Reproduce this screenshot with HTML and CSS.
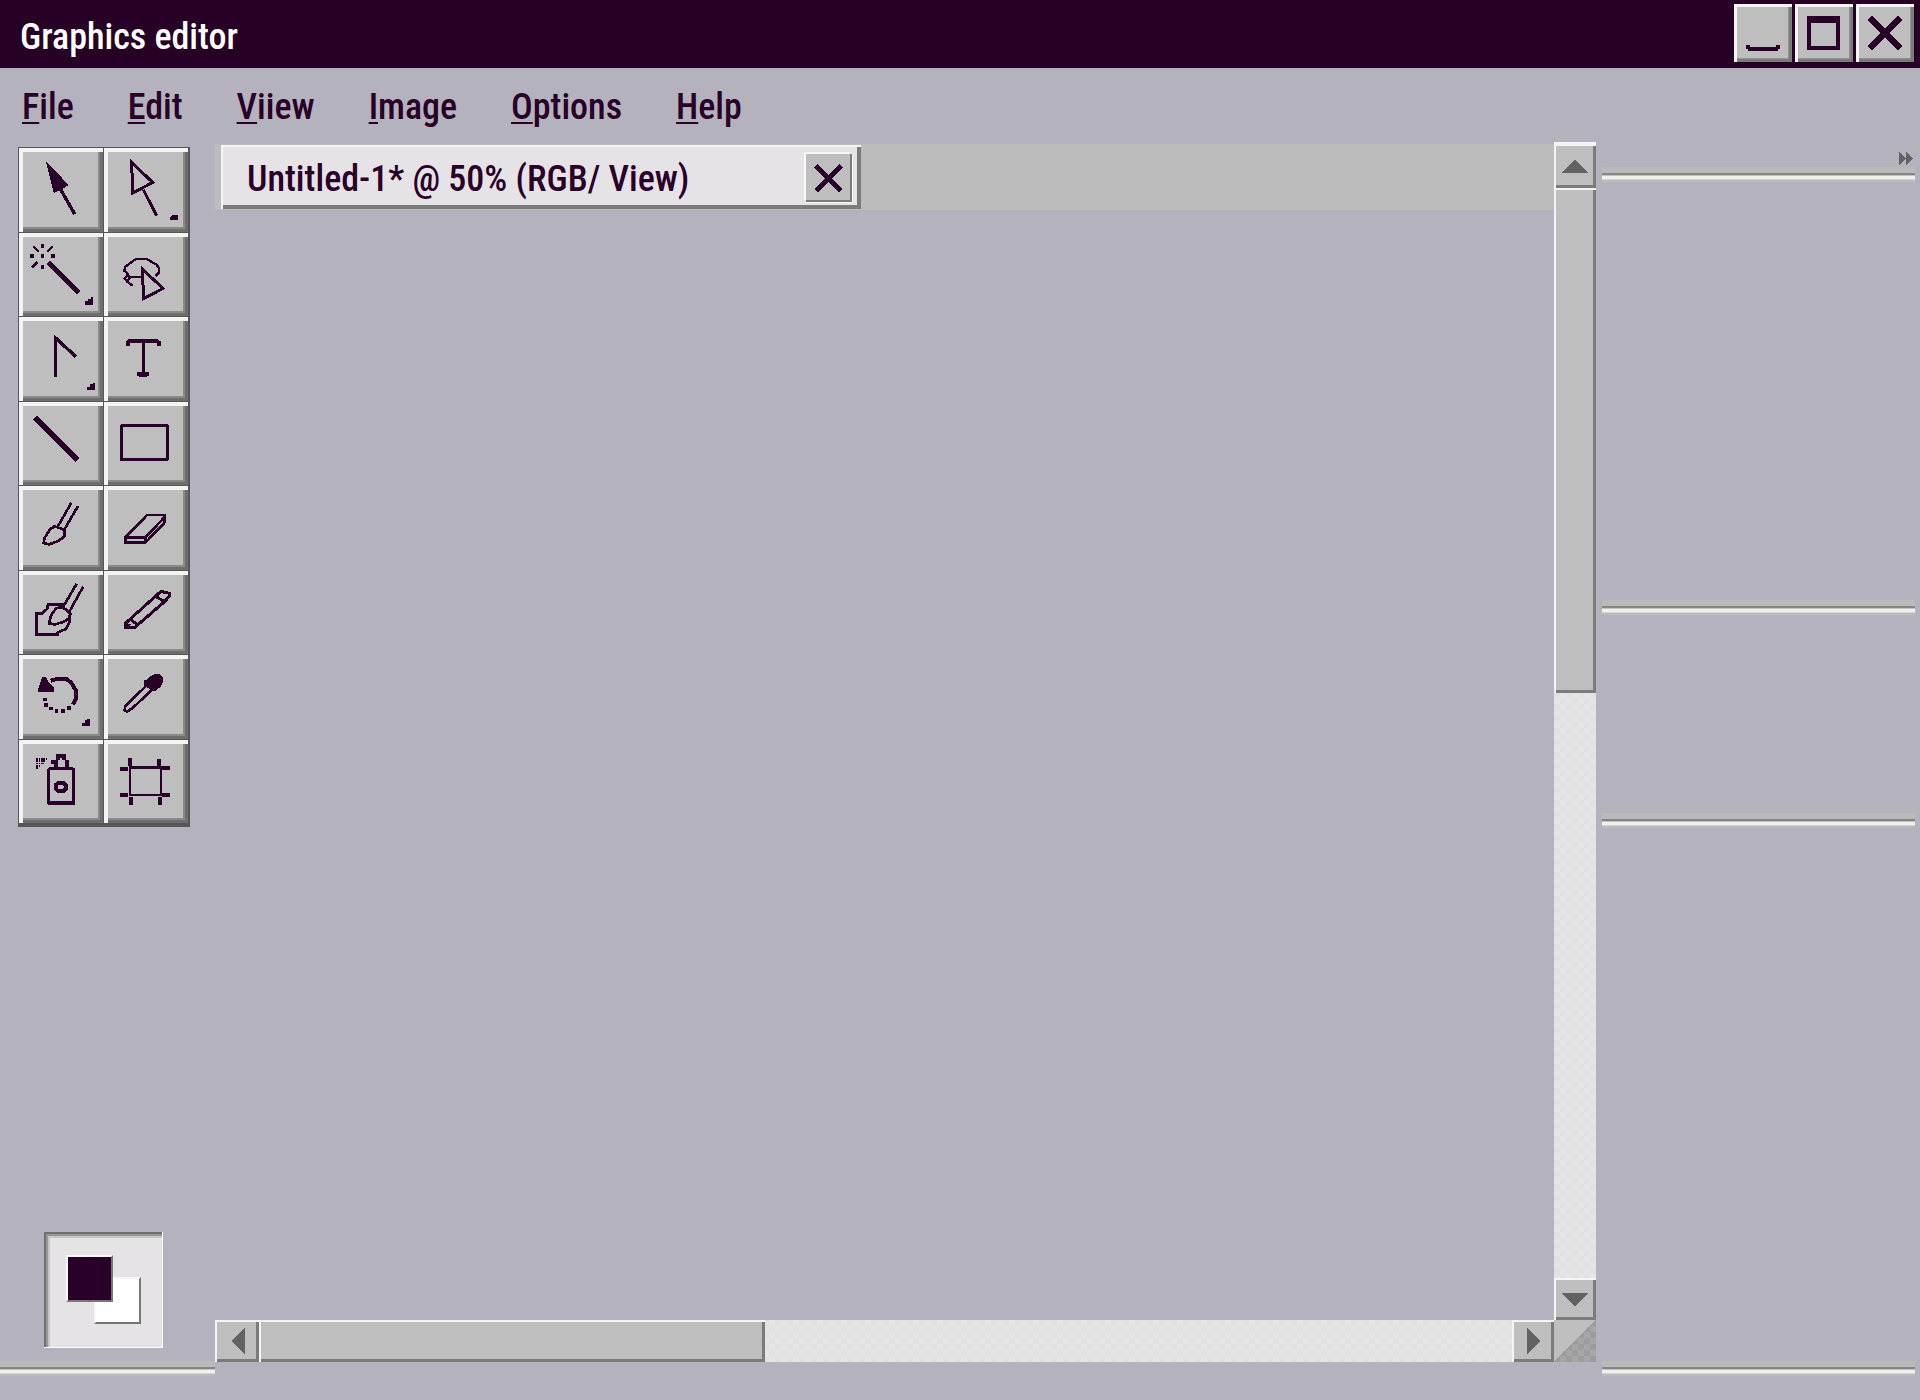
FILE: index.html
```html
<!DOCTYPE html>
<html lang="en">
<head>
<meta charset="utf-8">
<title>Graphics editor</title>
<link rel="stylesheet" href="styles.css">
</head>
<body>
<header class="titlebar">
  <h1 class="title">Graphics editor</h1>
  <div class="window-buttons">
    <button class="win-btn" aria-label="Minimize"><svg viewBox="0 0 174 174"><path class="f" d="M37 123h12v6h76v-6h12v12h-4v6H41v-6h-4z"/></svg></button>
    <button class="win-btn" aria-label="Maximize"><svg viewBox="0 0 174 174"><path d="M42 42h88v90H42z" stroke-width="12"/><path d="M41 47h90" stroke-width="22"/></svg></button>
    <button class="win-btn" aria-label="Close"><svg viewBox="0 0 174 174"><path d="M42 42l91 91M133 42l-91 91" stroke-width="19"/></svg></button>
  </div>
</header>
<nav class="menubar">
  <a href="#file"><u>F</u>ile</a>
  <a href="#edit"><u>E</u>dit</a>
  <a href="#view"><u>V</u>iiew</a>
  <a href="#image"><u>I</u>mage</a>
  <a href="#options"><u>O</u>ptions</a>
  <a href="#help"><u>H</u>elp</a>
</nav>
<main class="workspace">
  <aside class="left">
    <div class="toolbox">
      <button aria-label="Select"><svg viewBox="3 3 252 250"><path class="f" d="M84 44L152 113 130 128 107 138z"/><path d="M126 124L170 201" stroke-width="10"/></svg></button>
      <button aria-label="Direct select"><svg viewBox="3 3 252 250"><path d="M86 46l63 60-60 32zM121 128l40 78" stroke-width="9"/><path class="f" d="M200 220v-8l8-8h16v16z"/></svg></button>
      <button aria-label="Magic wand"><svg viewBox="3 3 252 250"><path d="M68 42h11M68 72h11M68 104h11M36 72h12M98 72h12" stroke-width="11"/><path d="M45 42l17 17M104 42l-17 17M42 106l17-17" stroke-width="7"/><path d="M91 90l91 91" stroke-width="14"/><path class="f" d="M202 218v-10h8v-8h8v-5h6v23z"/></svg></button>
      <button aria-label="Lasso"><svg viewBox="3 3 252 250"><path d="M76 126L64 116 67 104 91 86 101 81H131L161 98 169 109 167 122 157 132M76 126L65 139 71 147 81 139 74 128M81 135H116M72 148L89 161" stroke-width="7"/><path d="M119 112L180 169 121 200z" stroke-width="9"/></svg></button>
      <button aria-label="Pen"><svg viewBox="3 3 252 250"><path d="M113 183V66L174 122" stroke-width="10"/><path class="f" d="M208 223v-10h8v-8h8v-5h8v23z"/></svg></button>
      <button aria-label="Text"><svg viewBox="3 3 252 250"><path d="M75 91V79L81 74H161L167 79V91" stroke-width="12"/><path d="M120 74V178" stroke-width="9"/><path d="M101 174H139M109 179H132" stroke-width="10"/></svg></button>
      <button aria-label="Line"><svg viewBox="3 3 252 250"><path d="M51 49L179 177" stroke-width="17"/></svg></button>
      <button aria-label="Rectangle"><svg viewBox="3 3 252 250"><rect x="54" y="74" width="139" height="102" rx="3" stroke-width="9"/></svg></button>
      <button aria-label="Brush"><svg viewBox="3 3 252 250"><path d="M160 53L118 127M180 63L138 135M109 124L130 130 140 138V154L120 168 93 178 77 174 79 160 95 134z" stroke-width="8"/></svg></button>
      <button aria-label="Eraser"><svg viewBox="3 3 252 250"><path d="M132 90H185V112L127 173H67V157zM67 157H127L185 96M127 157V173" stroke-width="8"/></svg></button>
      <button aria-label="Smudge"><svg viewBox="3 3 252 250"><path d="M176 41L135 111M196 49L155 123M115 114L133 111 147 121 157 131 155 144 135 156 110 163 93 160 99 136zM138 103H90L88 116 72 130H56V194H118V188L145 176 155 156V136" stroke-width="8"/></svg></button>
      <button aria-label="Pencil"><svg viewBox="3 3 252 250"><path d="M174 64L200 70V78L181 98 94 173H66V161L159 77zM159 80L184 94M80 146L104 164" stroke-width="9"/><path class="f" d="M66 158L84 162 80 170 94 174H66z"/></svg></button>
      <button aria-label="Undo"><svg viewBox="3 3 252 250"><path class="f" d="M73 68h10l10 18 16 16v12H60v-8z"/><path d="M98 80L115 75H145L159 85 175 111V133L165 151" stroke-width="12"/><path d="M76 136h11M78 153h11M93 163h11M110 170h11M129 170h11M147 161h11" stroke-width="11"/><path class="f" d="M192 217v-10h8v-8h8v-5h9v23z"/></svg></button>
      <button aria-label="Eyedropper"><svg viewBox="3 3 252 250"><path class="f" d="M122 80l12-5 8-8 10-6h18l10 10v14l-8 14-10 6-7 7h-11v-6l-22-10z"/><path d="M131 94L67 156 65 169 73 172 91 160 147 107" stroke-width="8"/></svg></button>
      <button aria-label="Spray"><svg viewBox="3 3 252 250"><rect x="92" y="89" width="75" height="106" rx="3" stroke-width="8"/><path d="M92 192H167" stroke-width="10"/><path d="M114 86V62M119 62V51H138V62M147 62V86M98 69H112" stroke-width="11"/><path d="M119 133H137L143 138V149L137 155H119L113 149V138z" stroke-width="12"/><path d="M55 59h36M55 66h29M55 73h22M55 80h15M55 87h8" stroke-width="5" stroke-dasharray="5 2"/></svg></button>
      <button aria-label="Crop"><svg viewBox="3 3 252 250"><path d="M81 86H174V168H81z" stroke-width="8"/><path d="M81 57V84M169 84V56M51 90H76M176 87H201M51 168H76M176 168H201M83 174V200M172 174V200" stroke-width="12" stroke-dasharray="12 1"/></svg></button>
    </div>
    <div class="swatches">
      <div class="swatch back"></div>
      <div class="swatch front"></div>
    </div>
    <hr class="groove">
  </aside>
  <section class="document">
    <div class="tabs">
      <div class="tab">
        <span class="tab-name">Untitled-1* @ 50% (RGB/ View)</span>
        <button class="tab-close" aria-label="Close document"><svg viewBox="0 0 46 46"><path d="M10 11l25 25M35 11L10 36" stroke-width="5"/></svg></button>
      </div>
    </div>
    <div class="canvas"></div>
    <div class="vscroll">
      <button class="arrow first" aria-label="Scroll up"><svg viewBox="0 0 42 42"><path class="g" d="M8 29L21 15 34 29z"/></svg></button>
      <div class="track"><div class="thumb"></div></div>
      <button class="arrow" aria-label="Scroll down"><svg viewBox="0 0 42 42"><path class="g" d="M8 15H34L21 29z"/></svg></button>
    </div>
    <div class="hscroll">
      <button class="arrow" aria-label="Scroll left"><svg viewBox="0 0 42 42"><path class="g" d="M29 8V35L15 21z"/></svg></button>
      <div class="track"><div class="thumb"></div></div>
      <button class="arrow" aria-label="Scroll right"><svg viewBox="0 0 42 42"><path class="g" d="M15 8V34L28 21z"/></svg></button>
    </div>
    <div class="corner"></div>
  </section>
  <aside class="right">
    <div class="panel-head"><button class="expand" aria-label="Expand panels"><svg viewBox="0 0 14 13"><path class="g" d="M0 0v13l7-6.500zM7 0v13l7-6.500z"/></svg></button></div>
    <hr class="groove">
    <div class="panel large"></div>
    <hr class="groove">
    <div class="panel small"></div>
    <hr class="groove">
    <div class="panel tall"></div>
    <hr class="groove">
  </aside>
</main>
</body>
</html>
```
FILE: styles.css
```css
:root {
  --ink: #290029;
  --base: #b4b2bc;
  --face: #bebebe;
  --light: #f4f4f4;
  --shade: #7b7b7b;
}
* { box-sizing: border-box; }
body {
  margin: 0;
  min-height: 100vh;
  display: flex;
  flex-direction: column;
  background: var(--base);
  color: var(--ink);
  font: 500 36px/42px "Roboto Condensed", "Roboto", sans-serif;
}
button { font: inherit; color: inherit; border: 0; padding: 0; background: var(--face); display: block; }
svg { display: block; width: 100%; height: 100%; fill: none; stroke: var(--ink); shape-rendering: crispEdges; }
.f { fill: var(--ink); stroke: none; }
.g { fill: #626262; stroke: none; }

.titlebar {
  height: 68px;
  display: flex;
  justify-content: space-between;
  align-items: center;
  padding: 0 6px 2px 20px;
  background: #270026;
}
.title { margin: 0; padding-top: 8px; font: inherit; color: #fff; }
.window-buttons { display: flex; gap: 3px; }
.win-btn {
  width: 58px;
  height: 58px;
  box-shadow: inset 0 3px var(--light), inset 3px 0 var(--light), inset -3px -3px var(--shade), inset -4px -4px #929292;
}

.menubar { height: 74px; display: flex; align-items: center; gap: 54px; padding: 4px 0 0 22px; }
.menubar a { color: inherit; text-decoration: none; }
.menubar u { text-decoration-thickness: 2px; text-underline-offset: 3px; }

.workspace { flex: 1; display: grid; grid-template-columns: 215px 1fr 324px; }

.left { display: flex; flex-direction: column; padding: 5px 0 24px; }
.toolbox {
  width: 172px;
  height: 680px;
  margin-left: 18px;
  display: grid;
  grid-template-columns: 84px 84px;
  grid-template-rows: repeat(8, 1fr);
  gap: 1px;
  padding: 1px 2px 4px 1px;
  background: #565656;
}
.toolbox button {
  min-height: 0;
  box-shadow: inset 0 4px var(--light), inset 4px 0 var(--light), inset -3px -3px #6e6e6e, inset -5px -5px #8a8a8a;
}
.swatches {
  width: 119px;
  height: 116px;
  margin: auto auto 13px 44px;
  display: grid;
  grid-template-columns: 28px 1fr;
  padding: 23px 0 0 22px;
  background: #e5e3e5;
  box-shadow: inset -1px -1px #fff, inset 2px 2px #707070, inset 4px 4px #969696, inset 6px 6px #c6c6c6;
}
.swatch { grid-row: 1; width: 47px; height: 47px; border: 2px solid; border-color: #f8f8f8 #777 #777 #f8f8f8; }
.back { grid-column: 2; margin-top: 22px; background: #fff; }
.front { grid-column: 1; background: var(--ink); }
.groove {
  width: 100%;
  height: 15px;
  margin: 0;
  border: 0;
  background: linear-gradient(#bababa 0 6px, #858582 6px 8px, #c4c4c2 8px 9px, #f0f0ee 9px 12px, #d4d4d2 12px 13px, #bbbbbd 13px);
}

.document {
  display: grid;
  grid-template-columns: 1fr 42px;
  grid-template-rows: 68px 1fr 42px;
  margin-bottom: 38px;
}
.tabs { padding: 3px 0 1px 6px; background: linear-gradient(var(--base) 0 2px, #bcbcbc 2px); }
.tab {
  width: 640px;
  height: 64px;
  display: flex;
  align-items: center;
  justify-content: space-between;
  padding: 2px 9px 0 26px;
  background: #e5e3e5;
  box-shadow: inset 0 2px #f4f4f4, inset 2px 0 #f4f4f4, inset -4px -4px #7b7b7b;
}
.tab-name { padding-top: 2px; }
.tab-close {
  width: 46px;
  height: 48px;
  box-shadow: inset -2px -2px var(--shade), -2px -2px #f8f8f8, 1px 1px #f8f8f8;
}
.vscroll { grid-area: 1 / 2 / 3; display: flex; flex-direction: column; }
.hscroll { grid-area: 3 / 1; display: flex; }
.arrow { flex: none; width: 42px; height: 42px; }
.first { height: 46px; }
.arrow, .thumb { box-shadow: inset 0 2px var(--light), inset 2px 0 var(--light), inset -3px -3px var(--shade); }
.arrow.first { box-shadow: inset 0 4px var(--light), inset 2px 0 var(--light), inset -3px -3px var(--shade); }
.track { flex: 1; background: conic-gradient(#e5e5e5 25%, #e1e1e1 0 50%, #e5e5e5 0 75%, #e1e1e1 0) 0 0 / 12px 12px; }
.thumb { background: var(--face); }
.vscroll .thumb { height: 46.3%; }
.hscroll .thumb { height: 100%; width: 40.4%; }
.hscroll .arrow:first-child { width: 44px; }
.corner {
  background:
    linear-gradient(135deg, var(--face) 50%, transparent 50%),
    conic-gradient(#a6a6a6 25%, #9c9c9c 0 50%, #a6a6a6 0 75%, #9c9c9c 0) 0 0 / 12px 12px;
}

.right { display: flex; flex-direction: column; padding: 0 5px 24px 6px; }
.panel-head { height: 25px; display: flex; justify-content: flex-end; align-items: flex-end; padding: 0 2px 2px; }
.expand { width: 14px; height: 13px; background: none; }
.large { flex: 418; }
.small { flex: 198; }
.tall { flex: 533; }
```
